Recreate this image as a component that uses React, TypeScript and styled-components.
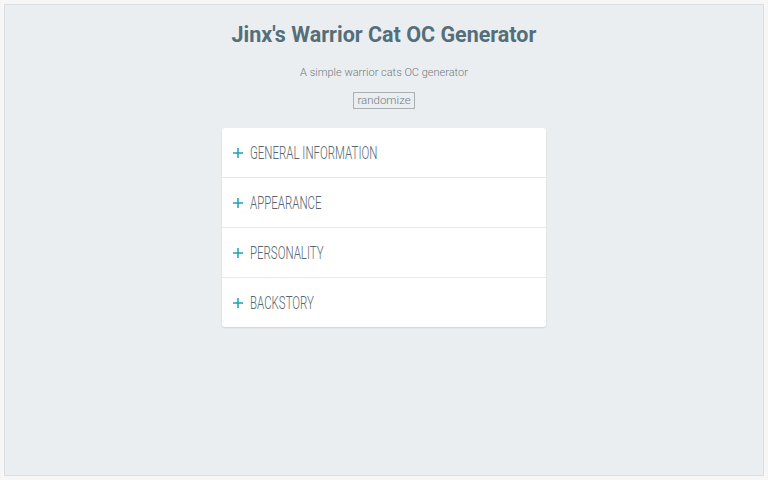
import React from "react";
import styled, { createGlobalStyle } from "styled-components";

const Global = createGlobalStyle`
  html, body { margin: 0; padding: 0; }
  body {
    background: #f6f6f6;
    font-family: Roboto, "Liberation Sans", sans-serif;
  }
`;

const Frame = styled.div`
  box-sizing: border-box;
  margin: 4px;
  height: 472px;
  border: 1px solid #dcdfe1;
  background: #eaeef1;
  display: flex;
  flex-direction: column;
  align-items: center;
  padding-top: 17px;
`;

const Title = styled.h1`
  margin: 0;
  font-family: Roboto, "Liberation Sans", sans-serif;
  font-weight: 700;
  font-size: 21.5px;
  line-height: 26px;
  color: #546e7a;
`;

const Subtitle = styled.p`
  margin: 18px 0 0;
  font-weight: 300;
  font-size: 11px;
  line-height: 14px;
  color: #6f7b82;
`;

const RandomButton = styled.button`
  margin-top: 12px;
  padding: 0 3px;
  height: 17px;
  font-family: Roboto, "Liberation Sans", sans-serif;
  font-weight: 300;
  font-size: 11.5px;
  line-height: 15px;
  color: #6f7b82;
  background: transparent;
  border: 1px solid #a9afb3;
  border-radius: 0;
`;

const Card = styled.div`
  margin-top: 19px;
  width: 324px;
  background: #ffffff;
  border-radius: 3px;
  box-shadow: 0 1px 2px rgba(0, 0, 0, 0.12);
  overflow: hidden;
`;

const Row = styled.div<{ $last?: boolean }>`
  height: ${(p) => (p.$last ? 49 : 49)}px;
  display: flex;
  align-items: center;
  padding-left: 11px;
  gap: 7px;
  border-bottom: ${(p) => (p.$last ? "none" : "1px solid #e6e9eb")};
`;

const Plus = styled.span`
  display: inline-flex;
  width: 10px;
  height: 10px;
  color: #1aa3b3;
`;

const HeadingBox = styled.span`
  display: inline-block;
  height: 22px;
`;

const Heading = styled.span`
  display: inline-block;
  font-family: Roboto, "Liberation Sans", sans-serif;
  font-weight: 300;
  font-size: 18.5px;
  line-height: 22px;
  color: #56666f;
  transform: scaleX(0.62);
  transform-origin: left center;
  white-space: nowrap;
`;

const sections = ["GENERAL INFORMATION", "APPEARANCE", "PERSONALITY", "BACKSTORY"];

export default function App() {
  return (
    <>
      <Global />
      <Frame>
        <Title>Jinx's Warrior Cat OC Generator</Title>
        <Subtitle>A simple warrior cats OC generator</Subtitle>
        <RandomButton>randomize</RandomButton>
        <Card>
          {sections.map((s, i) => (
            <Row key={s} $last={i === sections.length - 1}>
              <Plus>
                <svg width="10" height="10" viewBox="0 0 10 10">
                  <path d="M5 0V10M0 5H10" stroke="currentColor" strokeWidth="1.5" />
                </svg>
              </Plus>
              <HeadingBox>
                <Heading>{s}</Heading>
              </HeadingBox>
            </Row>
          ))}
        </Card>
      </Frame>
    </>
  );
}
